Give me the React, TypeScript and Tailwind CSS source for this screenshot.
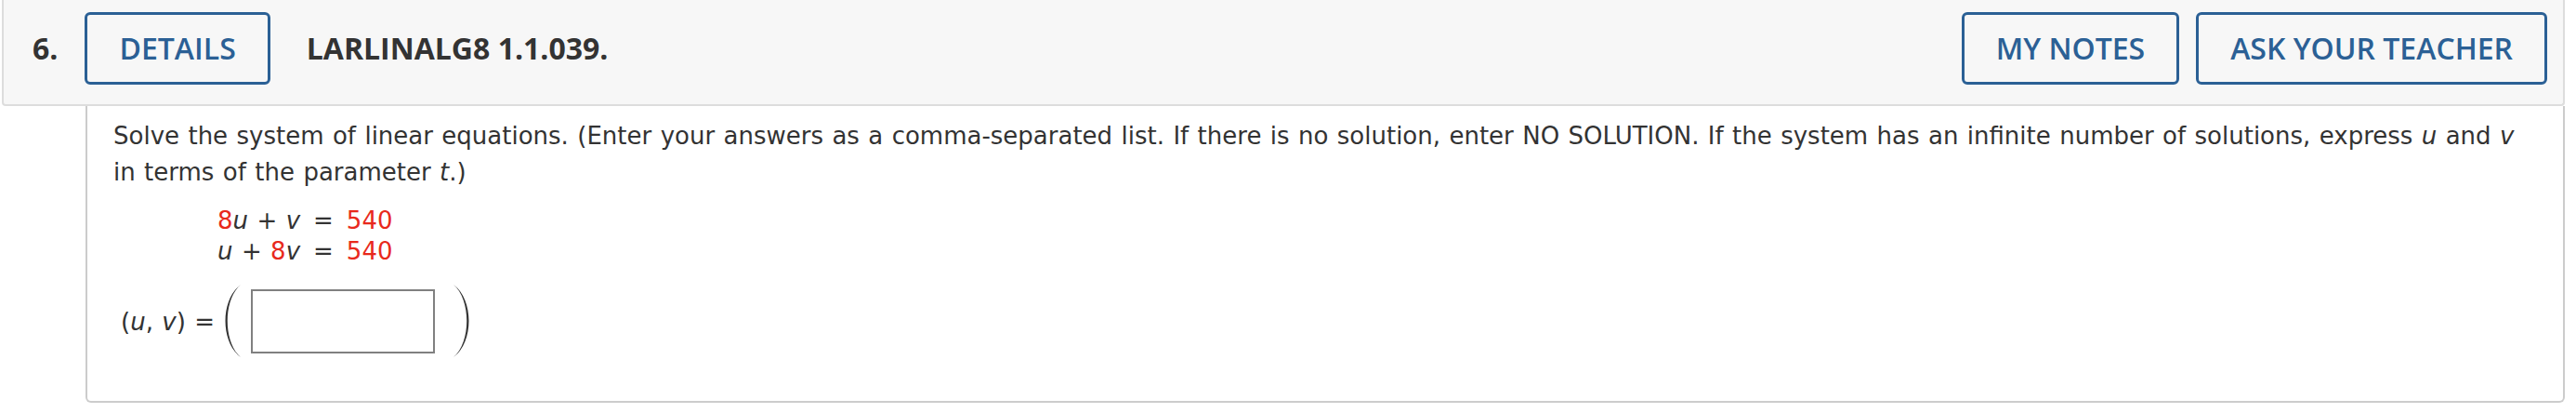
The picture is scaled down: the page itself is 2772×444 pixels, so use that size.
import React from 'react';

// Stretchy parenthesis drawn as a thin crescent
function Paren({ side }: { side: 'left' | 'right' }) {
  const d =
    side === 'left'
      ? 'M18 0 C -4 16, -4 62, 18 78 C -1 62, -1 16, 18 0 Z'
      : 'M2 0 C 24 16, 24 62, 2 78 C 21 62, 21 16, 2 0 Z';
  return (
    <svg width="20" height="78" viewBox="0 0 20 78" className="shrink-0">
      <path d={d} fill="#333333" />
    </svg>
  );
}

function HeaderButton({ label }: { label: string }) {
  return (
    <button className="h-[78px] px-[34px] border-[3px] border-[#2b6095] rounded-[6px] text-[32px] font-semibold text-[#2b6095] leading-none">
      {label}
    </button>
  );
}

export default function App() {
  return (
    <div className="w-[2772px] h-[444px] bg-white pl-[2px] pr-[12px] text-[#333333]">
      {/* Question header */}
      <div
        className="h-[114px] bg-[#f7f7f7] border-2 border-t-0 border-[#dddddd] rounded-b-[4px] flex items-start pt-[13px] pl-[31px] pr-[17px]"
        style={{ fontFamily: '"Open Sans", "Liberation Sans", sans-serif' }}
      >
        <span className="text-[32px] font-bold leading-[78px] text-[#333333]">6.</span>
        <div className="ml-[29px]">
          <HeaderButton label="DETAILS" />
        </div>
        <span className="ml-[39px] text-[32px] font-bold leading-[78px] text-[#333333]">LARLINALG8 1.1.039.</span>
        <div className="ml-auto flex gap-[18px]">
          <HeaderButton label="MY NOTES" />
          <HeaderButton label="ASK YOUR TEACHER" />
        </div>
      </div>

      {/* Question body */}
      <div
        className="ml-[90px] h-[319px] border-2 border-t-0 border-[#cccccc] rounded-b-[6px] pt-[13px] pl-[28px] pr-[24px] text-[26px] [word-spacing:1.15px]"
        style={{ fontFamily: '"DejaVu Sans", Verdana, sans-serif' }}
      >
        <p className="leading-[39px]">
          Solve the system of linear equations. (Enter your answers as a comma-separated list. If there is no
          solution, enter NO SOLUTION. If the system has an infinite number of solutions, express <i>u</i> and{' '}
          <i>v</i> in terms of the parameter <i>t</i>.)
        </p>

        <div className="mt-[16px] ml-[112px] grid grid-cols-[auto_auto_auto] gap-x-[14px] w-fit leading-[33px]">
          <span>
            <span className="text-[#e8291c]">8</span>
            <i>u</i> + <i>v</i>
          </span>
          <span>=</span>
          <span className="text-[#e8291c]">540</span>
          <span>
            <i>u</i> + <span className="text-[#e8291c]">8</span>
            <i>v</i>
          </span>
          <span>=</span>
          <span className="text-[#e8291c]">540</span>
        </div>

        <div className="mt-[19px] ml-[8px] flex items-center">
          <span className="leading-[33px] pt-[2px]">
            (<i>u</i>, <i>v</i>) =
          </span>
          <div className="ml-[10px]">
            <Paren side="left" />
          </div>
          <input
            type="text"
            className="ml-[9px] w-[198px] h-[69px] border-2 border-[#808080] bg-white outline-none"
          />
          <div className="ml-[18px]">
            <Paren side="right" />
          </div>
        </div>
      </div>
    </div>
  );
}
